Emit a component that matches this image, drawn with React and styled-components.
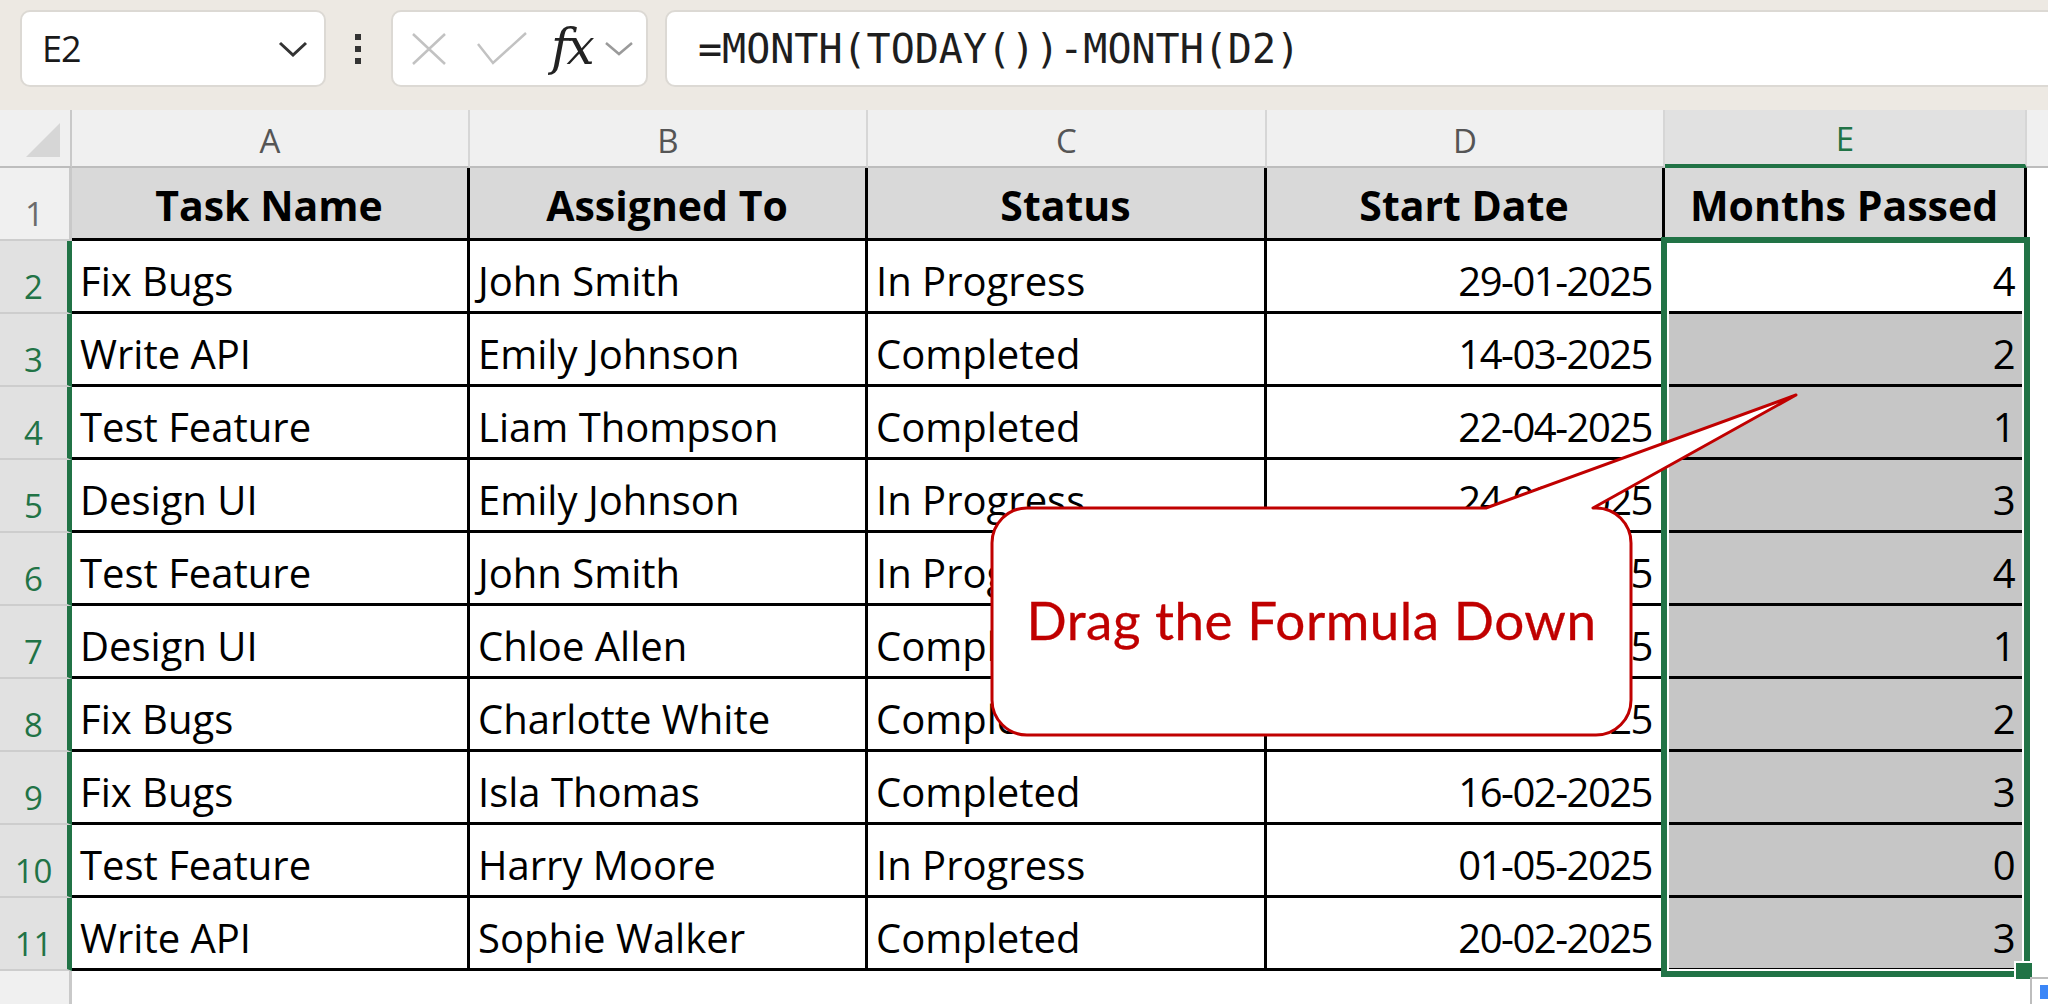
import React from 'react';
import styled, { createGlobalStyle } from 'styled-components';

const GlobalStyle = createGlobalStyle`
  html, body { margin: 0; padding: 0; background: #fff; overflow: hidden; }
  body { width: 2048px; height: 1004px; font-family: "Open Sans", "Noto Sans", sans-serif; }
  #root { width: 2048px; height: 1004px; }
`;

const GREEN = '#217346';
const RED = '#c00000';

const Page = styled.div`
  position: relative;
  width: 2048px;
  height: 1004px;
  overflow: hidden;
  background: #fff;
  display: flex;
  flex-direction: column;
`;

const Toolbar = styled.div`
  flex: none;
  height: 110px;
  box-sizing: border-box;
  background: #ede9e3;
  display: flex;
  align-items: flex-start;
  padding: 10px 0 0 20px;
  overflow: hidden;
`;

const Field = styled.div`
  flex: none;
  height: 77px;
  box-sizing: border-box;
  background: #fff;
  border: 2px solid #dcd9d4;
  border-radius: 10px;
  display: flex;
  align-items: center;
`;

const NameBox = styled(Field)`
  width: 306px;
  padding: 0 16px 0 20px;
  justify-content: space-between;
  font-size: 36px;
  color: #1a1a1a;
  letter-spacing: -1px;
`;

const Dots = styled.div`
  flex: none;
  height: 77px;
  margin: 0 30px 0 29px;
  display: flex;
  flex-direction: column;
  justify-content: center;
  gap: 6px;
`;

const Dot = styled.span`
  display: block;
  width: 6px;
  height: 6px;
  background: #333;
`;

const FxBox = styled(Field)`
  width: 257px;
  padding-left: 18px;
`;

const IconSlot = styled.span`
  display: flex;
  align-items: center;
  margin-left: ${p => p.$gap || 0}px;
`;

const FxText = styled.span`
  font-family: "DejaVu Serif", "Liberation Serif", serif;
  font-style: italic;
  font-size: 50px;
  line-height: 1;
  color: #222;
  letter-spacing: -3px;
  margin-top: -4px;
`;

const FormulaBox = styled(Field)`
  flex: 1;
  margin-left: 17px;
  margin-right: -30px;
  padding-left: 31px;
  font-family: "DejaVu Sans Mono", "Liberation Mono", monospace;
  font-size: 40px;
  color: #1e1e1e;
`;

const Sheet = styled.div`
  flex: none;
  display: grid;
  grid-template-columns: 72px 398px 398px 399px 398px 362px 1fr;
  grid-template-rows: 58px repeat(12, 73px);
`;

const Corner = styled.div`
  position: relative;
  box-sizing: border-box;
  background: #f0f0f0;
  border-right: 2px solid #c9c9c9;
  border-bottom: 2px solid #bdbdbd;
`;

const CornerTri = styled.span`
  position: absolute;
  right: 10px;
  bottom: 9px;
  width: 0;
  height: 0;
  border-left: 34px solid transparent;
  border-bottom: 34px solid #d6d6d6;
`;

const ColHead = styled.div`
  box-sizing: border-box;
  display: flex;
  align-items: flex-end;
  justify-content: center;
  padding-bottom: 9px;
  font-size: 33px;
  line-height: 1;
  background: ${p => (p.$active ? '#e1e1e1' : '#f0f0f0')};
  color: ${p => (p.$active ? GREEN : '#555')};
  border-right: 2px solid #d6d6d6;
  border-bottom: ${p => (p.$active ? `4px solid ${GREEN}` : '2px solid #bdbdbd')};
`;

const RowHead = styled.div`
  box-sizing: border-box;
  display: flex;
  align-items: flex-end;
  justify-content: center;
  padding-bottom: 9px;
  font-size: 33px;
  line-height: 1;
  background: ${p => (p.$active ? '#e1e1e1' : '#f0f0f0')};
  color: ${p => (p.$active ? GREEN : '#6b6b6b')};
  border-right: ${p => (p.$active ? `5px solid ${GREEN}` : '3px solid #c9c9c9')};
  border-bottom: 2px solid #cdcdcd;
`;

const Cell = styled.div`
  box-sizing: border-box;
  display: flex;
  align-items: flex-end;
  justify-content: ${p => (p.$align === 'right' ? 'flex-end' : p.$align === 'center' ? 'center' : 'flex-start')};
  padding: 0 ${p => (p.$num ? 10 : 9)}px ${p => (p.$head ? 12 : 10)}px 8px;
  font-size: ${p => (p.$head ? '41px' : '40px')};
  font-weight: ${p => (p.$head ? 700 : 400)};
  letter-spacing: ${p => (p.$num ? '-1.5px' : '0')};
  line-height: 1;
  color: #000;
  white-space: nowrap;
  overflow: hidden;
  background: ${p => (p.$head ? '#d9d9d9' : p.$selected ? '#c6c6c6' : '#fff')};
  border-right: 3px solid #000;
  border-bottom: 3px solid #000;
`;

const Blank = styled.div`
  background: ${p => (p.$head ? '#f0f0f0' : '#fff')};
  border-bottom: ${p => (p.$head ? '2px solid #bdbdbd' : 'none')};
  box-sizing: border-box;
`;

const Selection = styled.div`
  position: absolute;
  left: 1661px;
  top: 237px;
  width: 369px;
  height: 740px;
  box-sizing: border-box;
  border: 6px solid ${GREEN};
  box-shadow: inset 0 0 0 2px #fff;
  pointer-events: none;
`;

const FillHandle = styled.div`
  position: absolute;
  left: 2014px;
  top: 961px;
  width: 16px;
  height: 16px;
  background: ${GREEN};
  border: 2px solid #fff;
`;

const AutoFill = styled.div`
  position: absolute;
  left: 2030px;
  top: 977px;
  width: 40px;
  height: 40px;
  box-sizing: border-box;
  background: #fff;
  border: 2px solid #bdbdbd;
`;

const AutoFillMark = styled.span`
  position: absolute;
  left: 8px;
  top: 6px;
  width: 16px;
  height: 14px;
  background: #3b86f7;
`;

const CalloutShape = styled.svg`
  position: absolute;
  left: 980px;
  top: 385px;
  width: 830px;
  height: 360px;
  overflow: visible;
`;

const CalloutLabel = styled.div`
  position: absolute;
  left: 992px;
  top: 506px;
  width: 639px;
  height: 227px;
  display: flex;
  align-items: center;
  justify-content: center;
  font-family: Lato, "Open Sans", sans-serif;
  font-size: 53px;
  letter-spacing: 0.5px;
  line-height: 1;
  color: ${RED};
  -webkit-text-stroke: 0.3px ${RED};
  white-space: nowrap;
`;

const columns = ['A', 'B', 'C', 'D', 'E'];
const headers = ['Task Name', 'Assigned To', 'Status', 'Start Date', 'Months Passed'];
const rows = [
  ['Fix Bugs', 'John Smith', 'In Progress', '29-01-2025', 4],
  ['Write API', 'Emily Johnson', 'Completed', '14-03-2025', 2],
  ['Test Feature', 'Liam Thompson', 'Completed', '22-04-2025', 1],
  ['Design UI', 'Emily Johnson', 'In Progress', '24-02-2025', 3],
  ['Test Feature', 'John Smith', 'In Progress', '18-01-2025', 4],
  ['Design UI', 'Chloe Allen', 'Completed', '10-04-2025', 1],
  ['Fix Bugs', 'Charlotte White', 'Completed', '05-03-2025', 2],
  ['Fix Bugs', 'Isla Thomas', 'Completed', '16-02-2025', 3],
  ['Test Feature', 'Harry Moore', 'In Progress', '01-05-2025', 0],
  ['Write API', 'Sophie Walker', 'Completed', '20-02-2025', 3],
];

const Chevron = ({ w = 30, h = 16, color = '#333', sw = 3 }) => (
  <svg width={w} height={h} viewBox={`0 0 ${w} ${h}`}>
    <polyline points={`2,2 ${w / 2},${h - 2} ${w - 2},2`} fill="none" stroke={color} strokeWidth={sw} />
  </svg>
);

export default function App() {
  return (
    <Page>
      <GlobalStyle />
      <Toolbar>
        <NameBox>
          <span>E2</span>
          <Chevron />
        </NameBox>
        <Dots>
          <Dot />
          <Dot />
          <Dot />
        </Dots>
        <FxBox>
          <IconSlot>
            <svg width="36" height="34" viewBox="0 0 36 34">
              <path d="M2 2 L34 32 M34 2 L2 32" stroke="#c2c2c2" strokeWidth="2.5" fill="none" />
            </svg>
          </IconSlot>
          <IconSlot $gap={30}>
            <svg width="50" height="33" viewBox="0 0 50 33">
              <polyline points="1,12 16,31 49,1" stroke="#c2c2c2" strokeWidth="2.5" fill="none" />
            </svg>
          </IconSlot>
          <IconSlot $gap={24}>
            <FxText>fx</FxText>
          </IconSlot>
          <IconSlot $gap={12}>
            <Chevron w={30} h={15} color="#9a9a9a" sw={2.5} />
          </IconSlot>
        </FxBox>
        <FormulaBox>=MONTH(TODAY())-MONTH(D2)</FormulaBox>
      </Toolbar>

      <Sheet>
        <Corner>
          <CornerTri />
        </Corner>
        {columns.map(c => (
          <ColHead key={c} $active={c === 'E'}>{c}</ColHead>
        ))}
        <Blank $head />

        <RowHead>1</RowHead>
        {headers.map(h => (
          <Cell key={h} $head $align="center">{h}</Cell>
        ))}
        <Blank />

        {rows.map((r, i) => (
          <React.Fragment key={i}>
            <RowHead $active>{i + 2}</RowHead>
            <Cell>{r[0]}</Cell>
            <Cell>{r[1]}</Cell>
            <Cell>{r[2]}</Cell>
            <Cell $align="right" $num>{r[3]}</Cell>
            <Cell $align="right" $num $selected={i > 0}>{r[4]}</Cell>
            <Blank />
          </React.Fragment>
        ))}

        <RowHead />
        <Blank />
        <Blank />
        <Blank />
        <Blank />
        <Blank />
        <Blank />
      </Sheet>

      <Selection />
      <FillHandle />
      <AutoFill>
        <AutoFillMark />
      </AutoFill>

      <CalloutShape viewBox="980 385 830 360">
        <path
          d="M1027 508 L1486 508 L1796 395 L1593 508 L1596 508 A35 35 0 0 1 1631 543 L1631 700 A35 35 0 0 1 1596 735 L1027 735 A35 35 0 0 1 992 700 L992 543 A35 35 0 0 1 1027 508 Z"
          fill="#fff"
          stroke={RED}
          strokeWidth="3"
          strokeLinejoin="round"
        />
      </CalloutShape>
      <CalloutLabel>Drag the Formula Down</CalloutLabel>
    </Page>
  );
}
